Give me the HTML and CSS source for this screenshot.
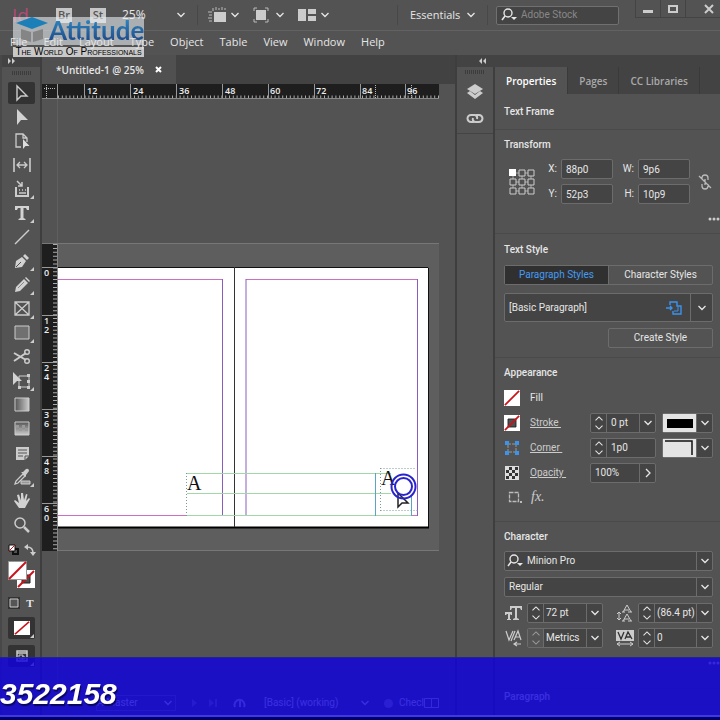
FILE: index.html
```html
<!doctype html>
<html lang="en">
<head>
<meta charset="utf-8">
<title>Untitled-1 @ 25%</title>
<link rel="stylesheet" href="styles.css">
</head>
<body>
  <svg class="defs" aria-hidden="true">
    <symbol id="down" viewBox="0 0 10 10"><path d="M1.5 3l3.5 3.5L8.500 3" fill="none" stroke="currentColor" stroke-width="1.3"/></symbol>
    <symbol id="right" viewBox="0 0 10 10"><path d="M3 1l4 4-4 4" fill="none" stroke="currentColor" stroke-width="1.3"/></symbol>
    <symbol id="updown" viewBox="0 0 16 20"><path d="M4 7l4-4 4 4M4 13l4 4 4-4" fill="none" stroke="currentColor" stroke-width="1.2"/></symbol>
    <symbol id="search" viewBox="0 0 18 14"><circle cx="7" cy="5" r="4" fill="none" stroke="currentColor" stroke-width="1.4"/><path d="M4 8L1 12" stroke="currentColor" stroke-width="1.600"/><path d="M10 9h6l-3 3z" fill="currentColor"/></symbol>
    <symbol id="none" viewBox="0 0 18 18"><path fill="#fff" d="M0 0h18v18H0z"/><path d="M1 17L17 1" stroke="#c8141c" stroke-width="2"/></symbol>
    <symbol id="nonestroke" viewBox="0 0 18 18"><path fill="#fff" d="M0 0h18v18H0z"/><path fill="#505050" stroke="#222" d="M4.500 4.500h9v9h-9z"/><path d="M1 17L17 1" stroke="#c8141c" stroke-width="2"/></symbol>
  </svg>

  <header class="topbar">
    <span class="app">Id</span>
    <button class="box-btn br">Br</button>
    <button class="box-btn st">St</button>
    <label class="zoom">
      <select aria-label="Zoom level"><option>25%</option></select>
      <svg class="chev"><use href="#down"/></svg>
    </label>
    <button class="view-btn" aria-label="View options">
      <svg width="18" height="16" viewBox="0 0 18 16"><path d="M6 5h12v10H6z" fill="#ccc"/><path d="M5 1v3M8 0v3M11 1v2M14 0v3M17 1v2M0 5h4M1 8h3M0 11h4M1 14h3" stroke="#bbb"/></svg>
      <svg class="chev"><use href="#down"/></svg>
    </button>
    <button class="view-btn" aria-label="Screen mode">
      <svg width="16" height="16" viewBox="0 0 16 16"><path d="M3 3h10v10H3z" fill="#ccc"/><path d="M1 4V1h3M12 1h3v3M15 12v3h-3M4 15H1v-3" fill="none" stroke="#bbb"/></svg>
      <svg class="chev"><use href="#down"/></svg>
    </button>
    <button class="view-btn" aria-label="Arrange documents">
      <svg width="18" height="16" viewBox="0 0 18 16"><path d="M0 2h8v12H0zM10 2h8v5h-8zM10 9h8v5h-8z" fill="#ccc"/></svg>
      <svg class="chev"><use href="#down"/></svg>
    </button>
    <label class="workspace-pick">
      <select aria-label="Workspace"><option>Essentials</option></select>
      <svg class="chev"><use href="#down"/></svg>
    </label>
    <label class="stock">
      <svg width="18" height="14"><use href="#search"/></svg>
      <input type="text" placeholder="Adobe Stock" aria-label="Search Adobe Stock">
    </label>
    <div class="win">
      <button aria-label="Minimize"><svg width="12" height="12"><path d="M1 7h10v3H1z" fill="#ccc"/></svg></button>
      <button aria-label="Maximize"><svg width="12" height="12"><path d="M2 3h8v6H2z" fill="none" stroke="#ccc" stroke-width="2"/></svg></button>
      <button aria-label="Close"><svg width="12" height="12"><path d="M2 2l8 8M10 2l-8 8" stroke="#ccc" stroke-width="2"/></svg></button>
    </div>
  </header>

  <nav class="menubar">
    <a href="#">File</a>
    <a href="#">Edit</a>
    <a href="#">Layout</a>
    <a href="#">Type</a>
    <a href="#">Object</a>
    <a href="#">Table</a>
    <a href="#">View</a>
    <a href="#">Window</a>
    <a href="#">Help</a>
  </nav>

  <main class="workspace">
    <aside class="toolbar">
      <div class="strip-head"><svg width="8" height="6"><path d="M0 0l3 3-3 3zM4 0l3 3-3 3z" fill="#ccc"/></svg></div>
      <div class="grip"></div>
      <div class="tools">
        <button class="on" aria-label="Selection"><svg viewBox="0 0 20 20"><path d="M5 3v14l4-4h6z" fill="none" stroke="#ccc" stroke-width="1.400"/></svg></button>
        <button aria-label="Direct selection"><svg viewBox="0 0 20 20"><path d="M5 2v16l4-5h7z" fill="#d2d2d2"/></svg></button>
        <button aria-label="Page"><svg viewBox="0 0 20 20"><path d="M9 16H4V3h7l4 4v4M11 3v4h4" fill="none" stroke="#ccc" stroke-width="1.300"/><path d="M11 8v10l2.500-3h4z" fill="#ddd"/></svg></button>
        <button aria-label="Gap"><svg viewBox="0 0 20 20"><path d="M2 3v14M18 3v14" stroke="#ccc" stroke-width="1.600"/><path d="M5 10h10M8 7l-3 3 3 3M12 7l3 3-3 3" fill="none" stroke="#ccc" stroke-width="1.300"/></svg></button>
        <button class="more" aria-label="Content collector"><svg viewBox="0 0 20 20"><path d="M4 8v9h12V8" fill="none" stroke="#ccc" stroke-width="2"/><path d="M7 11h1M10 11h1M13 11h1M7 14h7" stroke="#ccc" stroke-width="1.500"/><path d="M5 2l5 5M10 3v4H6" fill="none" stroke="#ccc" stroke-width="1.500"/></svg></button>
        <button class="more" aria-label="Type"><svg viewBox="0 0 20 20"><path d="M3 3h14v4h-2l-1-2h-2.500v10l2 1v1h-7v-1l2-1V5H6L5 7H3z" fill="#d2d2d2"/></svg></button>
        <button aria-label="Line"><svg viewBox="0 0 20 20"><path d="M3 17L17 3" stroke="#ccc" stroke-width="1.500"/></svg></button>
        <button class="more" aria-label="Pen"><svg viewBox="0 0 20 20"><path d="M3 17l1-7 6-4 4 4-4 6zM11 5l2-2 4 4-2 2z" fill="#d2d2d2"/><path d="M4 16l5-5" stroke="#505050"/></svg></button>
        <button class="more" aria-label="Pencil"><svg viewBox="0 0 20 20"><path d="M3 17l1-5 8-8 4 4-8 8zM13 3l1-1 4 4-1 1z" fill="#d2d2d2"/><path d="M6 13l6-6" stroke="#888"/></svg></button>
        <button class="more" aria-label="Frame"><svg viewBox="0 0 20 20"><path d="M3 3h14v13H3zM3 3l14 13M17 3L3 16" fill="none" stroke="#ccc" stroke-width="1.300"/></svg></button>
        <button class="more" aria-label="Rectangle"><svg viewBox="0 0 20 20"><path d="M3 3h14v13H3z" fill="#707070" stroke="#ccc"/></svg></button>
        <button aria-label="Scissors"><svg viewBox="0 0 20 20"><path d="M2 6l12 7M2 14l12-8" stroke="#ccc" stroke-width="2"/><circle cx="15" cy="5" r="2.300" fill="none" stroke="#ccc" stroke-width="1.400"/><circle cx="15" cy="14" r="2.300" fill="none" stroke="#ccc" stroke-width="1.400"/></svg></button>
        <button class="more" aria-label="Free transform"><svg viewBox="0 0 20 20"><path d="M7 5h10v11H7z" fill="none" stroke="#ccc"/><path d="M6 15h3v3H6zM15 15h3v3h-3zM15 3h3v3h-3zM15 9h3v3h-3z" fill="#ccc"/><path d="M1 1v13l4-4h5z" fill="#d2d2d2"/></svg></button>
        <button aria-label="Gradient swatch"><svg viewBox="0 0 20 20"><linearGradient id="g1"><stop stop-color="#555"/><stop offset="1" stop-color="#ccc"/></linearGradient><path d="M3 3h14v13H3z" fill="url(#g1)" stroke="#ccc"/></svg></button>
        <button aria-label="Gradient feather"><svg viewBox="0 0 20 20"><linearGradient id="g2" x2="0" y2="1"><stop stop-color="#555"/><stop offset="1" stop-color="#ccc"/></linearGradient><path d="M3 3h14v13H3z" fill="url(#g2)" stroke="#ccc"/><path d="M4 6h3v3H4zM10 6h3v3h-3zM7 9h3v3H7zM13 9h3v3h-3z" fill="#999"/></svg></button>
        <button aria-label="Note"><svg viewBox="0 0 20 20"><path d="M4 4h13v9l-4 4H4z" fill="#ccc"/><path d="M6 7h9M6 10h9M6 13h5" stroke="#555" stroke-width="1.200"/><path d="M13 17v-4h4" fill="none" stroke="#555"/></svg></button>
        <button class="more" aria-label="Eyedropper"><svg viewBox="0 0 20 20"><path d="M3 17l1-3 7-7 2 2-7 7z" fill="none" stroke="#ccc" stroke-width="1.300"/><path d="M9 5l2 0 3-3q3-1 3 2l-3 4v2z" fill="#ccc"/><path d="M9 14h9v3H9z" fill="#999" stroke="#ccc"/></svg></button>
        <button aria-label="Hand"><svg viewBox="0 0 20 20"><path d="M7 17l-5-7 1-1 4 3-2-8 2-.5 2 6V2h2l1 7 2-6 1.500.5L14 10l3-3 1 1-4 7-1 2z" fill="#d2d2d2"/></svg></button>
        <button aria-label="Zoom"><svg viewBox="0 0 20 20"><circle cx="8" cy="8" r="5" fill="none" stroke="#ccc" stroke-width="1.500"/><path d="M12 12l5 5" stroke="#ccc" stroke-width="2.500"/></svg></button>
      </div>
      <div class="mini-row">
        <button aria-label="Default fill and stroke"><svg width="12" height="12"><path d="M5 5h5v5H5z" fill="none" stroke="#111" stroke-width="2"/><path d="M1 1h6v6H1z" fill="#fff" stroke="#111"/><path d="M1 7l6-6" stroke="#c8141c"/></svg></button>
        <button aria-label="Swap fill and stroke"><svg width="12" height="12"><path d="M3 3q6 0 6 6" fill="none" stroke="#ccc" stroke-width="1.500"/><path d="M0 3l4-3v6zM9 12L6 8h6z" fill="#ccc"/></svg></button>
      </div>
      <button class="swatches" aria-label="Fill and stroke"><svg width="28" height="28" viewBox="0 0 28 28"><path d="M9 9h18v18H9z" fill="#fff"/><path d="M14 14h8v8h-8z" fill="#505050" stroke="#222"/><path d="M10 26L26 10" stroke="#c8141c" stroke-width="2"/><path d="M.5.5h18v18H.5z" fill="#fff" stroke="#999"/><path d="M1 18L18 1" stroke="#c8141c" stroke-width="2"/></svg></button>
      <div class="mini-row fmt">
        <button class="on" aria-label="Formatting affects container"><svg width="12" height="12"><path d="M2 2h8v8H2z" fill="#555" stroke="#ccc"/></svg></button>
        <button>T</button>
      </div>
      <button class="wide more" aria-label="Apply none"><svg width="16" height="14" viewBox="0 0 18 18" preserveAspectRatio="none"><use href="#none"/></svg></button>
      <button class="wide more" aria-label="Screen mode"><svg width="12" height="12"><path d="M1 1h10v10H1zM1 3h10" fill="none" stroke="#ccc" stroke-width="1.500"/><path d="M3 5h4v4H3zM6 7h3v2H6z" fill="none" stroke="#ccc"/></svg></button>
    </aside>

    <section class="document">
      <div class="tabs">
        <div class="tab">*Untitled-1 @ 25% <button aria-label="Close document"><svg width="7" height="7"><path d="M1 1l5 5M6 1L1 6" stroke="#fff" stroke-width="2"/></svg></button></div>
      </div>
      <svg class="ruler" width="397" height="15" viewBox="42 84 397 15">
        <path fill="#1e1e1e" d="M42 84h397v15H42z"/>
        <path d="M58 97h381" stroke="#aaa" stroke-width="3" stroke-dasharray="1 2.800"/>
        <path d="M57.500 84v15M84.500 84v15M130.500 84v15M176.500 84v15M222.500 84v15M268.500 84v15M314.500 84v15M360.500 84v15M405.500 84v15" stroke="#999"/>
        <path d="M42 98.500h397" stroke="#888"/>
        <path d="M44 88.500h12M46.500 85v13M375.500 85v13M411.500 85v13" stroke="#bbb" stroke-dasharray="1 1"/>
        <g class="marks">
          <text x="87" y="94">12</text><text x="133" y="94">24</text><text x="179" y="94">36</text><text x="225" y="94">48</text>
          <text x="270" y="94">60</text><text x="316" y="94">72</text><text x="362" y="94">84</text><text x="407" y="94">96</text>
        </g>
      </svg>
      <div class="canvas">
        <svg width="397" height="590" viewBox="42 99 397 590">
          <!-- pasteboard -->
          <path fill="#5e5e5e" d="M42 243h397v308H42z"/>
          <path d="M57.500 99v590" stroke="#5f5f5f"/>
          <path d="M42 243.500h397M42 550.500h397" stroke="#777"/>
          <!-- vertical ruler -->
          <path fill="#1e1e1e" d="M42 244h15v307H42z"/>
          <path d="M55 244v307" stroke="#aaa" stroke-width="4" stroke-dasharray="1 2.900"/>
          <path d="M42 267.500h15M42 315.500h15M42 362.500h15M42 409.500h15M42 456.500h15M42 503.500h15" stroke="#999"/>
          <path d="M57.500 244v307" stroke="#888"/>
          <g class="marks">
            <text x="44" y="276">0</text>
            <text x="44" y="324">1</text><text x="44" y="333">2</text>
            <text x="44" y="371">2</text><text x="44" y="380">4</text>
            <text x="44" y="418">3</text><text x="44" y="427">6</text>
            <text x="44" y="465">4</text><text x="44" y="474">8</text>
            <text x="44" y="512">6</text><text x="44" y="521">0</text>
          </g>
          <!-- spread -->
          <path fill="#fff" d="M58 267h371v261H58z"/>
          <path d="M58 267.500h370.500v260H58" fill="none" stroke="#111"/>
          <path d="M58 527.500h371" stroke="#000" stroke-width="2"/>
          <path d="M234.500 267v260" stroke="#333"/>
          <!-- margins -->
          <path d="M58 279.500h165M246 279.500h171M58 515.500h129M411 515.500h6" stroke="#cc6fc0"/>
          <path d="M222.500 279v237M246 279v237M417.500 279v237" fill="none" stroke="#8a5cc0"/>
          <!-- smart guides -->
          <path d="M187 473.500h204M187 493.500h204M187 515.500h224" stroke="#a2d8a8"/>
          <path d="M375.500 473v43M411.500 496v20" stroke="#5aa4c4"/>
          <path d="M186.500 473v43M380.500 468.500h34M380.500 468v43M380.500 510.500h37" fill="none" stroke="#7a9a96" stroke-dasharray="1 2"/>
          <text class="glyph" x="187" y="490">A</text>
          <text class="glyph" x="381" y="485">A</text>
          <path d="M398 493v14l4-4h6z" fill="#fff" stroke="#222" stroke-width="1.500"/>
          <circle cx="403.500" cy="486.500" r="12" fill="none" stroke="#2a24cc" stroke-width="2"/>
          <circle cx="403.500" cy="486.500" r="8.500" fill="#fff" stroke="#2a24cc" stroke-width="2"/>
        </svg>
      </div>
      <div class="status">
        <label class="page-pick"><select aria-label="Page"><option>A-Master</option></select><svg class="chev"><use href="#down"/></svg></label>
        <button aria-label="Next page"><svg width="8" height="10"><path d="M1 1l5 4-5 4z" fill="#888"/></svg></button>
        <button aria-label="Last page"><svg width="8" height="10"><path d="M0 1l5 4-5 4zM6 1h2v8H6z" fill="#888"/></svg></button>
        <button class="open" aria-label="Open"><svg width="16" height="14"><path d="M3 11a5 5 0 1 1 9 0M8 5v6" fill="none" stroke="#ccc" stroke-width="2"/></svg></button>
        <label class="profile"><select aria-label="Preflight profile"><option>[Basic] (working)</option></select><svg class="chev"><use href="#down"/></svg></label>
        <span class="dot"></span><span class="check">Checl</span>
        <button aria-label="Split layout"><svg width="15" height="12"><path d="M.5 1.500h14v9H.5zM7.500 1v10" fill="none" stroke="#ccc"/></svg></button>
      </div>
    </section>

    <aside class="dock">
      <div class="strip-head"><svg width="8" height="6"><path d="M3 0L0 3l3 3zM7 0L4 3l3 3z" fill="#ccc"/></svg></div>
      <div class="dock-body">
        <div class="icon-strip">
          <div class="grip"></div>
          <button aria-label="Layers"><svg width="18" height="18"><path d="M9 1l8 5-8 5-8-5z" fill="#ccc"/><path d="M1 10l3-2 5 4 5-4 3 2-8 6z" fill="#ccc"/></svg></button>
          <button aria-label="Links"><svg width="18" height="18"><path d="M8 12H5a3 3 0 0 1 0-7h4q3 1 2 4M10 5h3a3 3 0 0 1 0 7H9q-3-1-2-4" fill="none" stroke="#ccc" stroke-width="2"/></svg></button>
        </div>
        <div class="panel">
          <div class="panel-tabs">
            <button class="current">Properties</button>
            <button>Pages</button>
            <button>CC Libraries</button>
          </div>

          <section class="frame-kind"><h2>Text Frame</h2></section>

          <section class="transform">
            <h2>Transform</h2>
            <div class="xywh">
              <svg class="ref-point" width="26" height="26" viewBox="0 0 26 26"><path d="M4 4h18v18H4zM4 13h18M13 4v18" fill="none" stroke="#aaa"/><path d="M10 1h6v6h-6zM19 1h6v6h-6zM1 10h6v6H1zM10 10h6v6h-6zM19 10h6v6h-6zM1 19h6v6H1zM10 19h6v6h-6zM19 19h6v6h-6z" fill="#505050" stroke="#ccc"/><path fill="#fff" d="M0 0h7v7H0z"/></svg>
              <label>X: <input type="text" value="88p0"></label>
              <label>W: <input type="text" value="9p6"></label>
              <button class="link" aria-label="Constrain proportions"><svg width="14" height="16"><path d="M4 6V4q0-3 3-3t3 3v2M4 10v2q0 3 3 3t3-3v-2M7 5v6M1 2l12 12" fill="none" stroke="#bbb" stroke-width="1.300"/></svg></button>
              <label>Y: <input type="text" value="52p3"></label>
              <label>H: <input type="text" value="10p9"></label>
            </div>
            <button class="dots" aria-label="More options"><svg width="12" height="4"><circle cx="2" cy="2" r="1.500"/><circle cx="6" cy="2" r="1.500"/><circle cx="10" cy="2" r="1.500"/></svg></button>
          </section>

          <section class="text-style">
            <h2>Text Style</h2>
            <div class="switch">
              <button class="current">Paragraph Styles</button>
              <button>Character Styles</button>
            </div>
            <div class="field para">
              <select aria-label="Paragraph style"><option>[Basic Paragraph]</option></select>
              <svg width="16" height="14" class="blue"><path d="M0 7h6M4 5l2 2-2 2M4 4V1h7v4h4v8H7v-3" fill="none" stroke="currentColor" stroke-width="1.400"/><path d="M8 10h4V6" fill="none" stroke="currentColor"/></svg>
              <span class="cell"><svg class="chev"><use href="#down"/></svg></span>
            </div>
            <button class="create">Create Style</button>
          </section>

          <section class="appearance">
            <h2>Appearance</h2>
            <div class="look">
              <svg class="sw" width="16" height="16"><use href="#none"/></svg>
              <span class="fill">Fill</span>
            </div>
            <div class="look">
              <svg class="sw" width="16" height="16"><use href="#nonestroke"/></svg>
              <a href="#">Stroke&nbsp;</a>
              <div class="field"><button class="spin" aria-label="Step stroke"><svg><use href="#updown"/></svg></button><input type="text" value="0 pt" aria-label="Stroke weight"><button class="cell" aria-label="Stroke presets"><svg class="chev"><use href="#down"/></svg></button></div>
              <div class="field kind"><span class="pic"><svg width="34" height="18"><path d="M4 5h26v9H4z"/></svg></span><button class="cell" aria-label="Stroke type"><svg class="chev"><use href="#down"/></svg></button></div>
            </div>
            <div class="look">
              <svg class="sw" width="16" height="16"><path d="M4 4h8v8H4z" fill="none" stroke="#999" stroke-dasharray="3 1"/><path d="M1 1h4v4H1zM11 1h4v4h-4zM1 11h4v4H1zM11 11h4v4h-4z" fill="#3a93ee"/></svg>
              <a href="#">Corner&nbsp;</a>
              <div class="field"><button class="spin" aria-label="Step corner"><svg><use href="#updown"/></svg></button><input type="text" value="1p0" aria-label="Corner size"></div>
              <div class="field kind"><span class="pic"><svg width="34" height="18"><path d="M2 2h27v14" fill="none" stroke="#111" stroke-width="1.500"/></svg></span><button class="cell" aria-label="Corner shape"><svg class="chev"><use href="#down"/></svg></button></div>
            </div>
            <div class="look">
              <svg class="sw" width="16" height="16"><path fill="#ddd" d="M1 1h14v14H1z"/><path d="M5 2h3v3H5zM11 2h3v3h-3zM2 5h3v3H2zM8 5h3v3H8zM5 8h3v3H5zM11 8h3v3h-3zM2 11h3v3H2zM8 11h3v3H8z" fill="#333"/></svg>
              <a href="#">Opacity&nbsp;</a>
              <div class="field"><input type="text" value="100%" aria-label="Opacity"><button class="cell" aria-label="Opacity slider"><svg class="chev"><use href="#right"/></svg></button></div>
            </div>
            <div class="effects">
              <button aria-label="Frame options"><svg width="16" height="14"><path d="M2.500 2.500h9v9h-9z" fill="none" stroke="#bbb" stroke-width="1.300" stroke-dasharray="4 1"/><path d="M13 11h2v2h-2z" fill="#bbb"/></svg></button>
              <button class="fx">fx.</button>
            </div>
          </section>

          <section class="character">
            <h2>Character</h2>
            <div class="field"><svg class="find" width="18" height="14"><use href="#search"/></svg><select aria-label="Font"><option>Minion Pro</option></select><span class="cell"><svg class="chev"><use href="#down"/></svg></span></div>
            <div class="field"><select aria-label="Font style"><option>Regular</option></select><span class="cell"><svg class="chev"><use href="#down"/></svg></span></div>
            <div class="metrics">
              <svg width="18" height="16"><path d="M5 1h12v4h-1l-1-2h-3v10l2 1v1H8v-1l2-1V3H7L6 5H5zM0 7h7v3H6L5 9v5h1v1H2v-1h1V9H2l-1 1H0z" fill="#ccc"/></svg>
              <div class="field"><button class="spin" aria-label="Step size"><svg><use href="#updown"/></svg></button><input type="text" value="72 pt" aria-label="Font size"><button class="cell" aria-label="Size presets"><svg class="chev"><use href="#down"/></svg></button></div>
              <svg width="18" height="18"><path d="M3 8v8M1 10l2-2 2 2M1 14l2 2 2-2M7 8l4-7 4 7M8 6h5M6 8h3M12 8h4M7 17l4-7 4 7M8 15h5M6 17h3M12 17h4" fill="none" stroke="#ccc"/></svg>
              <div class="field"><button class="spin" aria-label="Step leading"><svg><use href="#updown"/></svg></button><input type="text" value="(86.4 pt)" aria-label="Leading"><button class="cell" aria-label="Leading presets"><svg class="chev"><use href="#down"/></svg></button></div>
              <svg width="18" height="18"><path d="M1 2l3 9 4-9M6 12l4-10M9 11l4-9 3 9M10 8h5M9 15h7M12 13l-3 2 3 2" fill="none" stroke="#ccc" stroke-width="1.200"/></svg>
              <div class="field"><button class="spin dim" aria-label="Step kerning"><svg><use href="#updown"/></svg></button><input type="text" value="Metrics" aria-label="Kerning"><button class="cell" aria-label="Kerning presets"><svg class="chev"><use href="#down"/></svg></button></div>
              <svg width="18" height="18"><path d="M0 1h18v11H0z" fill="#ccc"/><path d="M2 3l3 7 3-7M9 10l3-7 4 7M10 8h5" fill="none" stroke="#333" stroke-width="1.300"/><path d="M1 15h16M4 13l-3 2 3 2M14 13l3 2-3 2" fill="none" stroke="#ccc"/></svg>
              <div class="field"><button class="spin" aria-label="Step tracking"><svg><use href="#updown"/></svg></button><input type="text" value="0" aria-label="Tracking"><button class="cell" aria-label="Tracking presets"><svg class="chev"><use href="#down"/></svg></button></div>
            </div>
            <button class="dots" aria-label="More options"><svg width="12" height="4"><circle cx="2" cy="2" r="1.500"/><circle cx="6" cy="2" r="1.500"/><circle cx="10" cy="2" r="1.500"/></svg></button>
          </section>

          <section class="paragraph"><h2>Paragraph</h2></section>
        </div>
      </div>
    </aside>
  </main>

  <div class="logo">
    <div class="logo-top">
      <svg width="34" height="26" viewBox="0 0 34 26"><path d="M1 6L17 0l16 6-16 6z" fill="#1c7fb8"/><path d="M6 12l10 3v10L6 22zM18 15l10-3v10l-10 3z" fill="#858585"/></svg>
      <span>Attitude</span>
    </div>
    <div class="logo-tag">The World Of Professionals</div>
  </div>

  <footer class="banner">3522158</footer>
</body>
</html>
```
FILE: styles.css
```css
* {
  box-sizing: border-box;
}
body {
  margin: 0;
  height: 100vh;
  display: flex;
  flex-direction: column;
  overflow: hidden;
  background: #535353;
  color: #e6e6e6;
  font: 10px/14px Roboto, sans-serif;
}
button, input, select {
  margin: 0;
  padding: 0;
  border: 0;
  background: none;
  color: inherit;
  font: inherit;
  appearance: none;
}
input, select {
  min-width: 0;
  outline: none;
}
button {
  display: flex;
  align-items: center;
  justify-content: center;
}
svg {
  display: block;
  flex: none;
}
a {
  color: inherit;
  text-decoration: none;
}
h2 {
  margin: 0;
  font-size: 10px;
  line-height: 14px;
  font-weight: 500;
}
.defs {
  position: absolute;
  width: 0;
  height: 0;
}
.chev {
  width: 10px;
  height: 10px;
}

/* top bar */
.topbar {
  display: flex;
  align-items: center;
  height: 31px;
  flex: none;
  padding-left: 12px;
  border-bottom: 1px solid #626262;
  font: 11px/16px 'Open Sans', sans-serif;
}
.app {
  width: 44px;
  color: #b04a78;
  font-size: 19px;
}
.box-btn {
  width: 16px;
  height: 15px;
  margin-right: 18px;
  background: #c6c6c6;
  color: #555;
  font-size: 11px;
  font-weight: 600;
}
.zoom {
  display: flex;
  align-items: center;
  width: 76px;
  height: 20px;
  margin-right: 10px;
  border-right: 1px solid #484848;
  font-size: 12px;
}
.st {
  margin-right: 16px;
}
.zoom select {
  width: 54px;
}
.view-btn {
  width: 45px;
  justify-content: space-between;
  padding-right: 13px;
}
.workspace-pick {
  display: flex;
  align-items: center;
  justify-content: space-between;
  width: 91px;
  height: 20px;
  margin-left: auto;
  padding: 0 11px 0 12px;
  border: solid #484848;
  border-width: 0 1px;
}
.workspace-pick select {
  width: 55px;
}
.stock {
  display: flex;
  align-items: center;
  width: 123px;
  height: 19px;
  margin: 0 16px 0 8px;
  padding-left: 4px;
  border: 1px solid #707070;
  border-radius: 2px;
  background: #444;
  font: 10px/14px Roboto, sans-serif;
}
.stock input {
  width: 90px;
  margin-left: 2px;
}
.stock input::placeholder {
  color: #888;
}
.win {
  display: flex;
  align-self: flex-start;
  height: 18px;
  border: solid #444;
  border-width: 0 0 1px 1px;
}
.win button {
  width: 25px;
  border-right: 1px solid #444;
}
.win button:last-child {
  width: 34px;
  padding-left: 12px;
  border: 0;
}

/* menu stays readable above the logo */
.menubar {
  position: relative;
  z-index: 2;
  display: flex;
  align-items: center;
  gap: 16px;
  height: 24px;
  flex: none;
  padding: 0 10px 2px;
  font: 11px/16px 'Open Sans', sans-serif;
}

/* workspace */
.workspace {
  flex: 1;
  min-height: 0;
  display: flex;
}
.strip-head {
  height: 12px;
  flex: none;
  display: flex;
  align-items: center;
  background: #434343;
}
.grip {
  width: 20px;
  height: 4px;
  background: repeating-linear-gradient(90deg, #3c3c3c 0 1px, transparent 1px 2px);
}

.toolbar {
  width: 42px;
  flex: none;
  padding-left: 8px;
  border-right: 2px solid #3e3e3e;
  box-shadow: inset 2px 0 #484848;
}
.toolbar .strip-head {
  margin-left: -6px;
  padding-left: 6px;
}
.toolbar .grip {
  margin: 4px 0 0 4px;
}
.tools {
  display: flex;
  flex-direction: column;
  gap: 2px;
  padding-top: 7px;
}
.tools button, .wide {
  position: relative;
  width: 27px;
  height: 22px;
  border-radius: 2px;
}
.tools svg {
  width: 20px;
  height: 20px;
}
.tools .on, .mini-row .on, .wide {
  background: #333;
}
.more::after {
  content: '';
  position: absolute;
  right: 1px;
  bottom: 1px;
  border: 2px solid transparent;
  border-right-color: #ccc;
  border-bottom-color: #ccc;
}
.mini-row {
  display: flex;
  justify-content: space-between;
  width: 28px;
  margin-top: 8px;
}
.swatches {
  margin-top: 5px;
}
.fmt {
  height: 12px;
  margin: 8px 0;
}
.fmt button {
  width: 12px;
  font: bold 11px/12px 'Liberation Serif', serif;
}
.wide {
  margin-bottom: 6px;
}

.document {
  flex: 1;
  min-width: 0;
  display: flex;
  flex-direction: column;
}
.tabs {
  height: 29px;
  flex: none;
  background: #424242;
}
.tab {
  display: flex;
  align-items: center;
  justify-content: space-between;
  width: 134px;
  height: 29px;
  padding: 0 14px;
  background: #505050;
  font: 600 10px/14px 'Open Sans', sans-serif;
}
.marks {
  fill: #eee;
  font: 600 9px 'Open Sans', sans-serif;
}
.glyph {
  fill: #111;
  font: 20px 'Liberation Serif', serif;
}
.canvas {
  flex: 1;
  min-height: 0;
  overflow: hidden;
}
.status {
  display: flex;
  align-items: center;
  height: 18px;
  flex: none;
  margin-bottom: 8px;
  padding-left: 54px;
}
.status label {
  display: flex;
  align-items: center;
}
.page-pick {
  width: 80px;
  height: 16px;
  margin-right: 15px;
  border: 1px solid #777;
}
.page-pick select {
  width: 66px;
}
.status button + button {
  margin-left: 10px;
}
.status .open {
  margin: 0 16px 0 15px;
}
.profile select {
  width: 96px;
}
.dot {
  width: 9px;
  height: 9px;
  margin: 0 6px 0 14px;
  border-radius: 50%;
  background: #999;
}

/* right dock */
.dock {
  width: 265px;
  flex: none;
  display: flex;
  flex-direction: column;
  border-left: 2px solid #3e3e3e;
}
.dock .strip-head {
  padding-left: 22px;
}
.dock-body {
  flex: 1;
  display: flex;
}
.icon-strip {
  width: 36px;
  display: flex;
  flex-direction: column;
  align-items: center;
  gap: 9px;
  height: 67px;
  padding-top: 3px;
  border-bottom: 1px solid #444;
}
.panel {
  flex: 1;
  min-width: 0;
  border-left: 2px solid #3e3e3e;
}
.panel-tabs {
  display: flex;
  height: 27px;
  background: #434343;
  color: #aaa;
  font: 600 10px/14px 'Open Sans', sans-serif;
}
.panel-tabs button {
  padding: 0 11px;
  border-right: 1px solid #3a3a3a;
}
.panel-tabs .current {
  background: #535353;
  color: #fff;
}
.panel section {
  padding: 8px 7px 0 9px;
  border-bottom: 1px solid #4a4a4a;
}
.panel .frame-kind {
  height: 36px;
  padding-top: 11px;
}
.transform {
  height: 104px;
}
.xywh {
  display: grid;
  grid-template-columns: 26px 70px 69px 14px;
  column-gap: 8px;
  row-gap: 5px;
  margin-top: 7px;
  padding-left: 5px;
}
.ref-point {
  grid-row: 1 / 3;
  align-self: center;
}
.link {
  grid-column: 4;
  grid-row: 1 / 3;
}
.xywh label {
  display: flex;
  align-items: center;
  justify-content: flex-end;
  gap: 4px;
}
.xywh input {
  width: 52px;
  height: 20px;
  padding-left: 4px;
  border: 1px solid #6c6c6c;
  border-radius: 2px;
  background: #444;
}
.dots {
  margin: 13px -7px 0 auto;
  fill: #ccc;
}
.text-style {
  height: 124px;
}
.text-style h2 {
  padding-top: 1px;
}
.switch {
  display: flex;
  height: 20px;
  margin: 8px 0;
  border: 1px solid #6c6c6c;
  border-radius: 2px;
}
.switch button {
  flex: 1;
}
.switch .current {
  background: #303030;
  color: #459bf0;
}
.switch button + button {
  border-left: 1px solid #6c6c6c;
}
.field {
  display: flex;
  align-items: center;
  height: 20px;
  border: 1px solid #6c6c6c;
  border-radius: 2px;
  background: #444;
}
.field input, .field select {
  flex: 1;
  padding-left: 4px;
}
.field.para {
  height: 29px;
}
.blue {
  margin-right: 8px;
  color: #3a93ee;
}
.cell, .spin {
  display: flex;
  align-items: center;
  justify-content: center;
  flex: none;
  align-self: stretch;
  width: 16px;
  border-left: 1px solid #6c6c6c;
}
.para .cell {
  width: 22px;
}
.spin {
  border: 0;
  border-right: 1px solid #6c6c6c;
}
.spin svg {
  width: 14px;
  height: 18px;
}
.dim {
  color: #999;
  background: #555;
}
.create {
  width: 105px;
  height: 20px;
  margin: 6px 0 0 auto;
  border: 1px solid #6c6c6c;
  border-radius: 2px;
}
.appearance {
  height: 164px;
}
.look {
  display: grid;
  grid-template-columns: 16px 58px 66px 51px;
  column-gap: 6px;
  align-items: center;
  height: 20px;
  margin-bottom: 5px;
}
h2 + .look {
  margin-top: 8px;
}
.look a {
  justify-self: start;
  color: #ccc;
  text-decoration: underline;
}
.look .fill, .look a {
  margin-left: 4px;
}
.pic {
  flex: 1;
  overflow: hidden;
  background: #e4e4e4;
}
.effects {
  display: flex;
  gap: 8px;
  padding-left: 3px;
  color: #ccc;
}
.fx {
  font: italic 14px/18px 'Liberation Serif', serif;
}
.character .field {
  margin-top: 6px;
}
.character h2 + .field {
  margin-top: 7px;
}
.find {
  margin-left: 2px;
}
.find + select {
  padding-left: 2px;
}
.metrics {
  display: grid;
  grid-template-columns: 23px 76px 35px 75px;
  align-items: center;
  row-gap: 5px;
  margin-top: 6px;
}
.metrics > svg {
  justify-self: end;
  margin-right: 4px;
}
.character .metrics .field {
  margin: 0;
}
.metrics input {
  padding-left: 2px;
}
.panel .paragraph {
  border: 0;
  padding-top: 1px;
}
.panel .character {
  height: 167px;
}

/* watermark in the corner */
.logo {
  position: absolute;
  left: 13px;
  top: 17px;
}
.logo-top {
  display: flex;
  width: 131px;
  height: 28px;
  padding-left: 2px;
  background: rgba(230, 236, 240, .6);
}
.logo-top span {
  background: linear-gradient(#2f8cc4, #1c3f80);
  background-clip: text;
  color: transparent;
  font: bold 26px/26px Lato, sans-serif;
}
.logo-tag {
  margin-top: 2px;
  width: 131px;
  background: rgba(240, 240, 240, .75);
  color: #000;
  font: small-caps 10px/10px 'Liberation Sans', sans-serif;
  white-space: nowrap;
  text-align: center;
}

/* caption strip along the bottom */
.banner {
  position: fixed;
  left: 0;
  right: 0;
  bottom: 0;
  height: 63px;
  padding-top: 19px;
  border-top: 1px solid #24248a;
  background: linear-gradient(transparent 57px, #4038e0 57px 59px, #00006c 59px), rgba(14, 0, 224, .8);
  color: #fff;
  font: italic bold 30px/34px 'Liberation Sans', sans-serif;
  text-shadow: 1px 2px 1px #0a0660;
}
```
